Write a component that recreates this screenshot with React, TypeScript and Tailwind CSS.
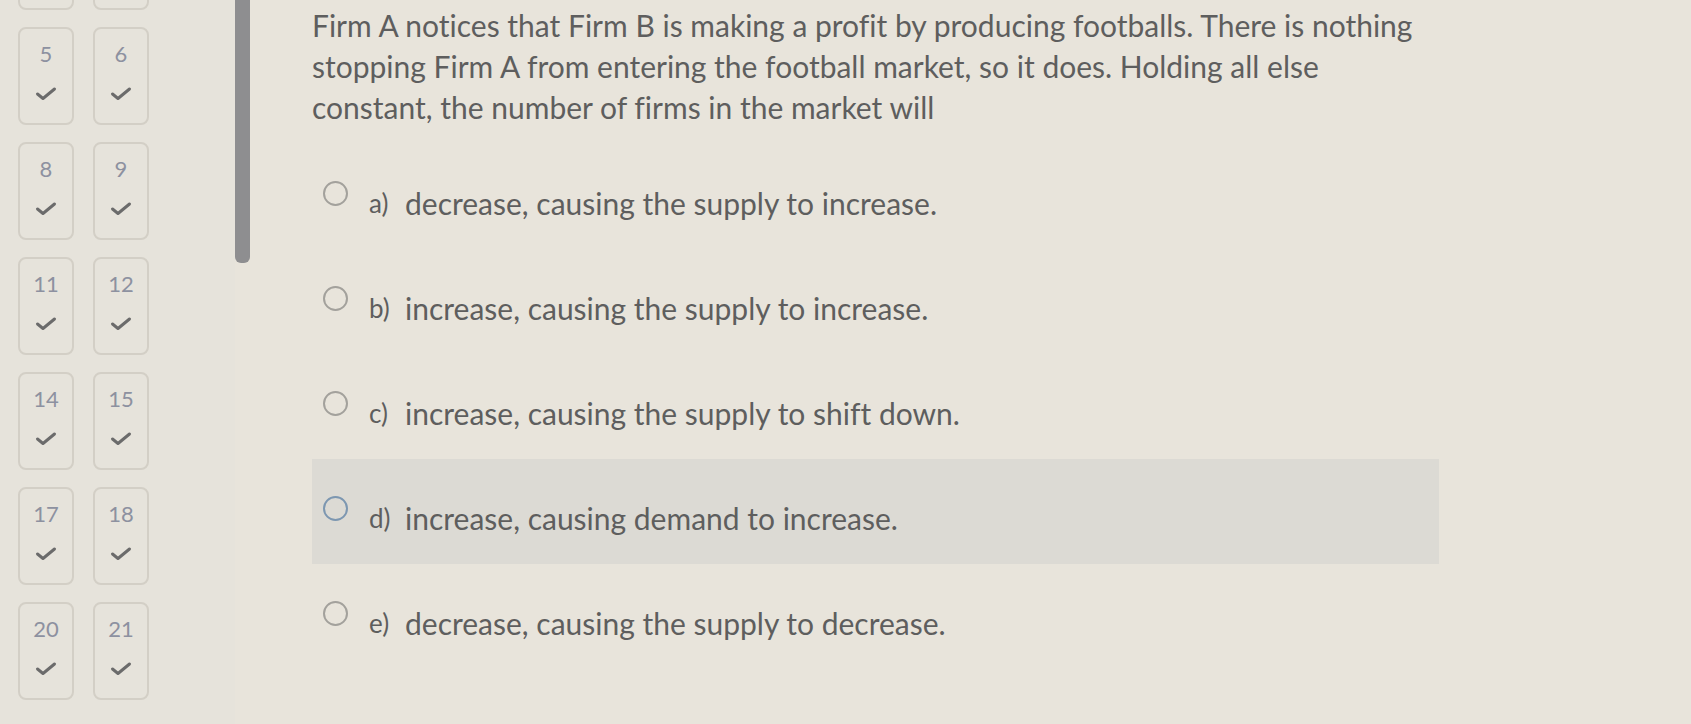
import React from 'react';

const ROWS: [number, number][] = [
  [5, 6],
  [8, 9],
  [11, 12],
  [14, 15],
  [17, 18],
  [20, 21],
];

const OPTIONS = [
  { key: 'a)', text: 'decrease, causing the supply to increase.' },
  { key: 'b)', text: 'increase, causing the supply to increase.' },
  { key: 'c)', text: 'increase, causing the supply to shift down.' },
  { key: 'd)', text: 'increase, causing demand to increase.', hover: true },
  { key: 'e)', text: 'decrease, causing the supply to decrease.' },
];

function Check() {
  return (
    <svg className="w-[22px] h-[15px]" viewBox="0 0 22 15" fill="none" stroke="#6b6b6b" strokeWidth={3} strokeLinecap="round" strokeLinejoin="round">
      <path d="M2.5 8l5.5 4.5L19.5 3" />
    </svg>
  );
}

function Tile({ n }: { n?: number }) {
  return (
    <div className="w-[56px] h-[98px] rounded-lg border-2 border-[#d3cfc6] flex flex-col items-center pt-[12px]">
      {n !== undefined && (
        <>
          <span className="text-[22px] leading-[26px] text-[#8d91a0]">{n}</span>
          <span className="mt-[19px]"><Check /></span>
        </>
      )}
    </div>
  );
}

export default function App() {
  return (
    <div
      className="w-[1691px] h-[724px] overflow-hidden bg-[#e8e4db] flex text-[#5e5e5e] [font-variant-ligatures:none]"
      style={{ fontFamily: 'Lato, "Open Sans", "Liberation Sans", sans-serif' }}
    >
      {/* question navigator */}
      <div className="w-[235px] shrink-0 pl-[18px] flex flex-col gap-[17px] -mt-[88px] bg-[#e6e3db]">
        <div className="flex gap-[19px]">
          <Tile />
          <Tile />
        </div>
        {ROWS.map(([a, b]) => (
          <div key={a} className="flex gap-[19px]">
            <Tile n={a} />
            <Tile n={b} />
          </div>
        ))}
      </div>

      {/* scrollbar */}
      <div className="w-[15px] shrink-0">
        <div className="h-[263px] bg-[#8e8e90] rounded-b-md" />
      </div>

      {/* question */}
      <div className="flex-1 pl-[62px] pt-[5px]">
        <p className="text-[30px] leading-[41px] w-[1115px]">
          Firm A notices that Firm B is making a profit by producing footballs. There is nothing stopping Firm A
          from entering the football market, so it does. Holding all else constant, the number of firms in the
          market will
        </p>
        <div className="mt-[16px] w-[1127px] flex flex-col">
          {OPTIONS.map((o) => (
            <div
              key={o.key}
              className={`h-[105px] flex items-center pl-[11px] pt-[14px] ${o.hover ? 'bg-[#dcdad4]' : ''}`}
            >
              <span
                className={`w-[25px] h-[25px] rounded-full border-2 mb-[20px] shrink-0 ${
                  o.hover ? 'border-[#7d97b1]' : 'border-[#a3a19c]'
                }`}
              />
              <span className="ml-[21px] text-[26px] w-[36px] shrink-0">{o.key}</span>
              <span className="text-[30px]">{o.text}</span>
            </div>
          ))}
        </div>
      </div>
    </div>
  );
}
